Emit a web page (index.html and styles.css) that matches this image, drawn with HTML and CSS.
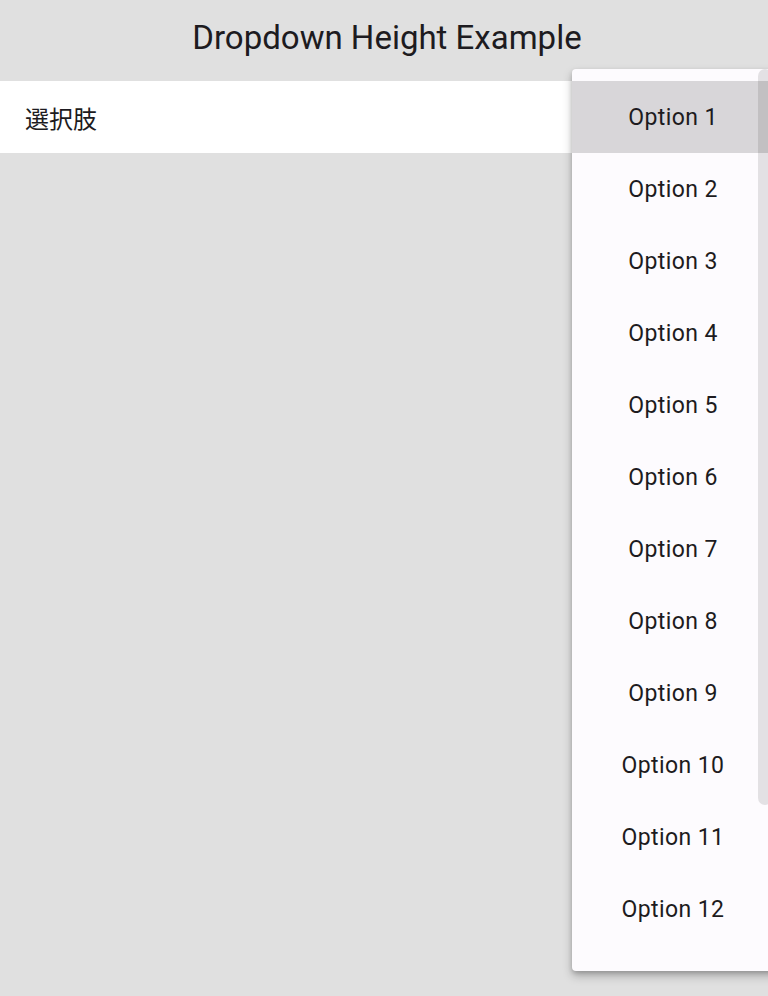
FILE: index.html
```html
<!DOCTYPE html>
<html lang="ja">
<head>
<meta charset="utf-8">
<title>Dropdown Height Example</title>
<link rel="stylesheet" href="styles.css">
</head>
<body>
<div class="app">
  <header class="appbar"><h1 class="title">Dropdown Height Example</h1></header>
  <div class="field">選択肢</div>
</div>
<div class="menu">
  <ul class="menu-list">
    <li class="item selected"><span class="label">Option 1</span></li>
    <li class="item"><span class="label">Option 2</span></li>
    <li class="item"><span class="label">Option 3</span></li>
    <li class="item"><span class="label">Option 4</span></li>
    <li class="item"><span class="label">Option 5</span></li>
    <li class="item"><span class="label">Option 6</span></li>
    <li class="item"><span class="label">Option 7</span></li>
    <li class="item"><span class="label">Option 8</span></li>
    <li class="item"><span class="label">Option 9</span></li>
    <li class="item"><span class="label">Option 10</span></li>
    <li class="item"><span class="label">Option 11</span></li>
    <li class="item"><span class="label">Option 12</span></li>
  </ul>
  <div class="scrollbar"></div>
</div>
</body>
</html>
```
FILE: styles.css
```css
html, body {
  margin: 0;
  padding: 0;
  height: 100%;
}
body {
  background: #e0e0e0;
  font-family: Roboto, "Noto Sans CJK JP", sans-serif;
  color: #1d1b20;
  overflow: hidden;
  position: relative;
}
.appbar {
  height: 81px;
  display: flex;
  align-items: center;
  justify-content: center;
}
.title {
  margin: 0;
  font-weight: 400;
  font-size: 33px;
  color: #1d1b20;
  padding-left: 6px;
  padding-bottom: 7px;
}
.field {
  height: 72px;
  background: #ffffff;
  display: flex;
  align-items: center;
  padding-left: 25px;
  font-family: "Noto Sans CJK JP", sans-serif;
  font-size: 24px;
}
.menu {
  position: absolute;
  left: 572px;
  top: 69px;
  width: 210px;
  height: 902px;
  background: #fdfbfe;
  border-radius: 4px;
  box-shadow: 0 5px 10px rgba(0,0,0,0.25), 0 2px 4px rgba(0,0,0,0.15);
  overflow: hidden;
}
.menu-list {
  list-style: none;
  margin: 12px 0 0;
  padding: 0;
}
.item {
  height: 72px;
  display: flex;
  align-items: center;
}
.label {
  width: 202px;
  text-align: center;
  font-size: 23px;
  letter-spacing: 0.4px;
  color: #1d1b20;
}
.item.selected {
  background: #d8d6d9;
}
.scrollbar {
  position: absolute;
  left: 186px;
  top: 0;
  width: 14px;
  height: 736px;
  border-radius: 7px;
  background: rgba(0,0,0,0.1);
}
```
